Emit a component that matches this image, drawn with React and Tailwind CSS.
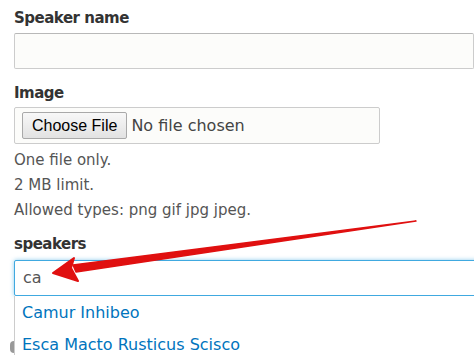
export default function App() {
  const font = { fontFamily: '"DejaVu Sans", "Lucida Grande", Verdana, sans-serif' }
  return (
    <div className="relative w-[474px] h-[355px] overflow-hidden bg-white text-[#333]" style={font}>
      <div className="pl-[14px] pt-[7px]">
        {/* Speaker name */}
        <label className="block text-[15px] font-bold leading-[22px] tracking-[-0.5px]">Speaker name</label>
        <div className="mt-[4px] h-[36px] w-[460px] rounded-[2px] border border-[#ccc] border-t-[#b8b8b8] bg-[#fcfcfa]" />

        {/* Image */}
        <label className="mt-[13px] block text-[15px] font-bold leading-[22px] tracking-[-0.5px]">Image</label>
        <div className="mt-[3px] flex h-[37px] w-[366px] items-center rounded-[2px] border border-[#ccc] bg-[#fcfcfa] pl-[7px]">
          <button
            className="h-[27px] rounded-[2px] border border-[#a9a9a9] bg-gradient-to-b from-[#f8f8f8] to-[#e2e2e2] px-[9px] text-[16px] text-black"
            style={{ fontFamily: '"Liberation Sans", Arial, sans-serif' }}
          >
            Choose File
          </button>
          <span className="ml-[4px] text-[16px] text-[#444]">No file chosen</span>
        </div>
        <div className="mt-[4px] text-[15px] leading-[25px] text-[#555]">
          <p>One file only.</p>
          <p>2 MB limit.</p>
          <p>Allowed types: png gif jpg jpeg.</p>
        </div>

        {/* speakers */}
        <label className="mt-[10px] block text-[15px] font-bold leading-[22px] tracking-[-0.5px]">speakers</label>
        <div className="mt-[5px] flex h-[36px] w-[470px] items-center rounded-[2px] border border-[#40a9e0] bg-white pl-[8px] text-[16px] text-[#555] shadow-[0_0_4px_rgba(64,169,224,0.6)]">
          ca
        </div>
        <ul className="w-[470px] border-l border-[#ccc] bg-white pl-[7px] text-[16px] text-[#0074bd]">
          <li className="h-[32px] leading-[34px]">Camur Inhibeo</li>
          <li className="h-[32px] leading-[34px]">Esca Macto Rusticus Scisco</li>
        </ul>
      </div>

      {/* partial element behind dropdown */}
      <div className="absolute left-[10px] top-[341px] h-[12px] w-[4px] rounded-l-full bg-[#999]" />

      {/* red annotation arrow */}
      <svg className="absolute inset-0" width="474" height="355" viewBox="0 0 474 355">
        <path d="M416 221 L73 265 L76 272 Z" fill="#e01010" stroke="#e01010" strokeWidth="1.5" strokeLinejoin="round" />
        <path d="M53 273 L74 258 L71 268 L78 281 Z" fill="#e01010" stroke="#e01010" strokeWidth="2" strokeLinejoin="round" />
      </svg>
    </div>
  )
}
